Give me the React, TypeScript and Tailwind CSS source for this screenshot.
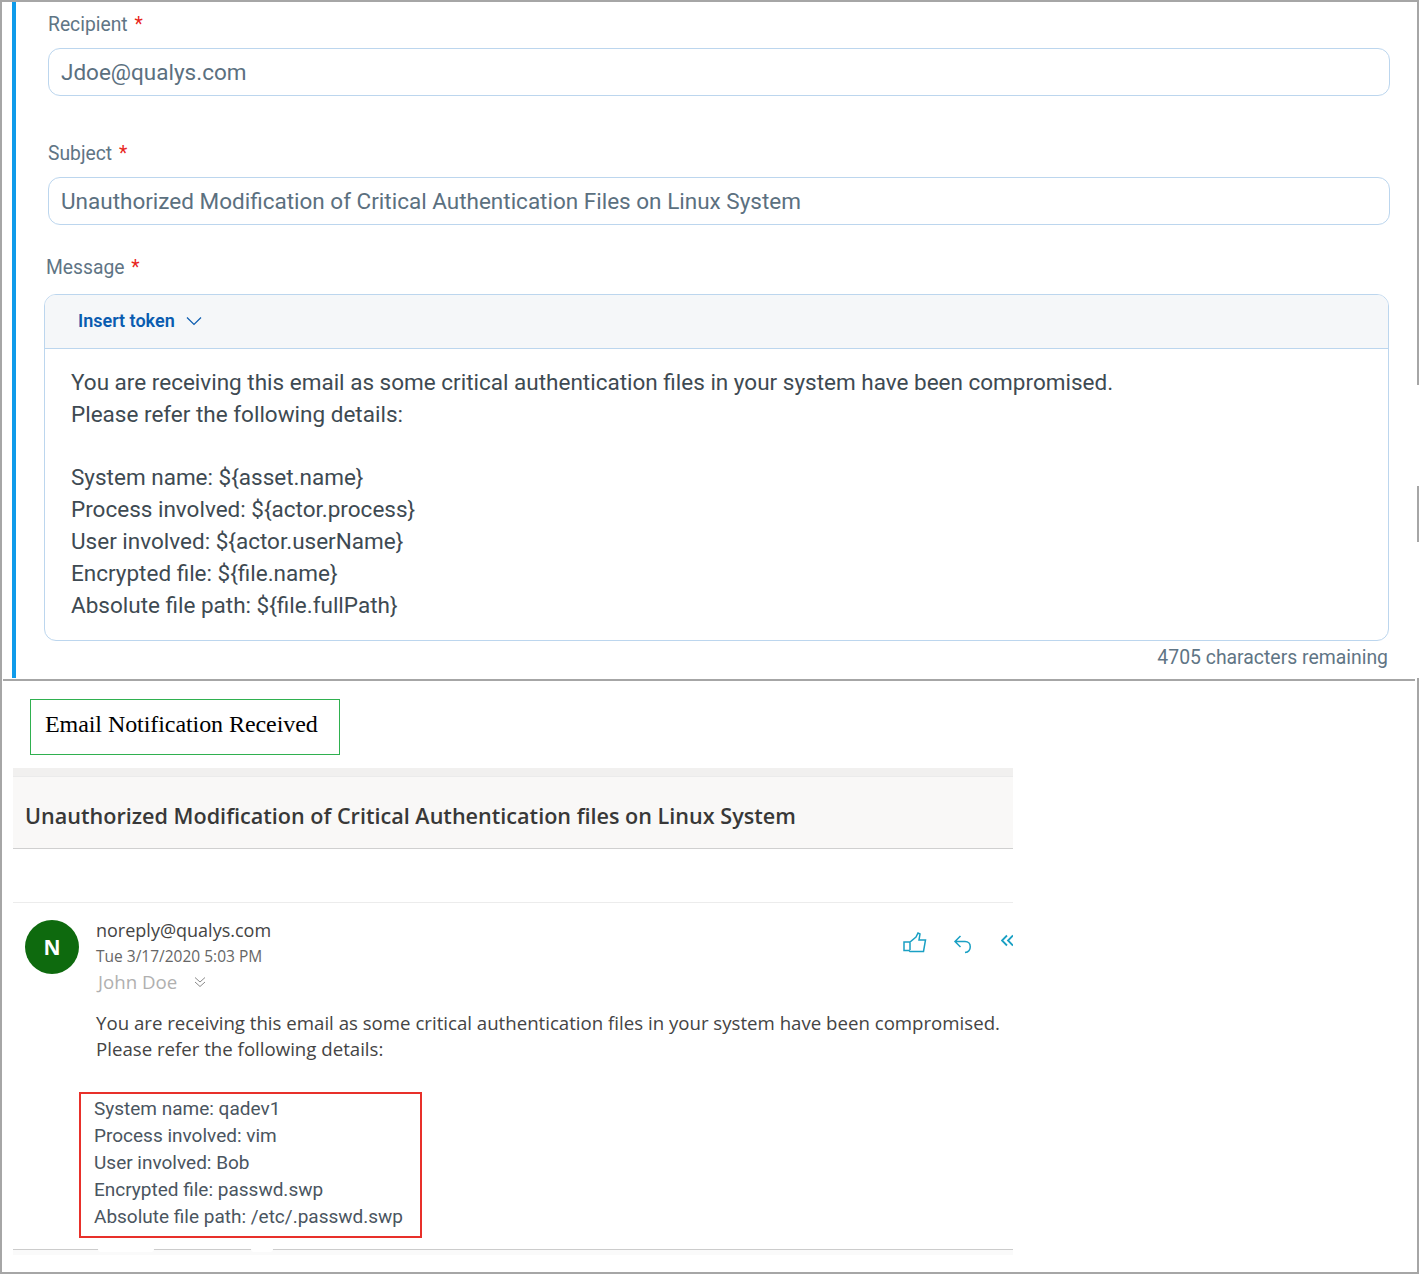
import React from 'react';

const roboto = "font-['Roboto',sans-serif]";
const openSans = "font-['Open_Sans',sans-serif]";

const messageLines = [
  'You are receiving this email as some critical authentication files in your system have been compromised.',
  'Please refer the following details:',
  '\u00a0',
  'System name: ${asset.name}',
  'Process involved: ${actor.process}',
  'User involved: ${actor.userName}',
  'Encrypted file: ${file.name}',
  'Absolute file path: ${file.fullPath}',
];

const details = [
  'System name: qadev1',
  'Process involved: vim',
  'User involved: Bob',
  'Encrypted file: passwd.swp',
  'Absolute file path: /etc/.passwd.swp',
];

function Label({ text, className }: { text: string; className: string }) {
  return (
    <div className={`text-[19.3px] leading-[24px] text-[#5f7585] ${className}`}>
      {text} <span className="ml-[2px] text-[#e8261c]">*</span>
    </div>
  );
}

function Field({ value, className }: { value: string; className: string }) {
  return (
    <div className={`flex h-[48px] items-center rounded-[12px] border border-[#bcd6ee] pl-[12px] pt-[1px] text-[22.5px] text-[#5b7080] ${className}`}>
      {value}
    </div>
  );
}

function FormPanel() {
  return (
    <section className={`ml-[10px] h-[676px] border-l-[4px] border-[#0f9bea] pt-[11px] ${roboto}`}>
      <Label text="Recipient" className="ml-[32px]" />
      <Field value="Jdoe@qualys.com" className="ml-[32px] mt-[11px] w-[1342px]" />
      <Label text="Subject" className="ml-[32px] mt-[46px]" />
      <Field value="Unauthorized Modification of Critical Authentication Files on Linux System" className="ml-[32px] mt-[11px] w-[1342px]" />
      <Label text="Message" className="ml-[30px] mt-[31px]" />
      <div className="ml-[28px] mt-[14px] h-[347px] w-[1345px] overflow-hidden rounded-[12px] border border-[#bcd6ee]">
        <div className="flex h-[54px] items-center gap-[11px] border-b border-[#bcd6ee] bg-[#f5f7f9] pb-[2px] pl-[33px] text-[18px] font-semibold text-[#0a5cb0]">
          Insert token
          <svg width="16" height="10" viewBox="0 0 16 10" fill="none" stroke="#0a5cb0" strokeWidth="1.2">
            <path d="M1 1.5 8 8.5 15 1.5" />
          </svg>
        </div>
        <div className="pl-[26px] pt-[18px] text-[22.5px] leading-[31.8px] text-[#3e4a52]">
          {messageLines.map((line, i) => (
            <div key={i}>{line}</div>
          ))}
        </div>
      </div>
      <div className="mt-[5px] w-[1372px] text-right text-[19.4px] leading-[24px] text-[#5f7585]">4705 characters remaining</div>
    </section>
  );
}

function EmailHeader() {
  return (
    <div className="flex h-[125px] border-t border-[#ececec] pl-[12px] pt-[17px]">
      <div className={`flex h-[54px] w-[54px] items-center justify-center rounded-full bg-[#0e6a0e] pt-[1px] text-[21px] font-bold text-white ${openSans}`}>N</div>
      <div className={`ml-[17px] ${openSans}`}>
        <div className="mt-[-3px] text-[18px] leading-[26px] text-[#444444]">noreply@qualys.com</div>
        <div className="text-[15.5px] leading-[26px] text-[#666666]">Tue 3/17/2020 5:03 PM</div>
        <div className="ml-[2px] flex items-center gap-[17px] text-[18.7px] leading-[26px] text-[#b0b0b0]">
          John Doe
          <svg width="12" height="12" viewBox="0 0 12 12" fill="none" stroke="#8a8a8a" strokeWidth="1">
            <path d="M1 1.5 6 6 11 1.5M1 6 6 10.5 11 6" />
          </svg>
        </div>
      </div>
      <div className="ml-auto mt-[11px] flex w-[110px] items-start overflow-hidden">
        <svg width="24" height="22" viewBox="0 0 24 22" fill="none" stroke="#1aa0c4" strokeWidth="1.5" className="mt-[1px] shrink-0">
          <path d="M1 10h6l6-5 2-4 2 1-1 6h6.500l-2 11.500H7l-1-1H1z M7 10v8" />
        </svg>
        <svg width="20" height="20" viewBox="0 0 20 20" fill="none" stroke="#1aa0c4" strokeWidth="1.5" className="ml-[26px] mt-[3px] shrink-0">
          <path d="M7.500 2 2 7.500 7.500 13M2 7.500h10c7 0 7 10 0 11" />
        </svg>
        <svg width="16" height="14" viewBox="0 0 16 14" fill="none" stroke="#1aa0c4" strokeWidth="1.800" className="ml-[28px] mt-[3px] shrink-0">
          <path d="M6 1.500 1 6.500 6 11.500M12 1.500 7 6.500 12 11.500M12 6.500h4" />
        </svg>
      </div>
    </div>
  );
}

function EmailPanel() {
  return (
    <div className="ml-[11px] mt-[13px] w-[1000px]">
      <div className="h-[9px] border-b border-[#ebebeb] bg-[#f1f0ef]" />
      <div className={`flex h-[72px] items-center border-b border-[#d0d0d0] bg-[#f9f8f7] pl-[12px] pt-[8px] text-[21.6px] font-semibold text-[#383838] ${openSans}`}>
        Unauthorized Modification of Critical Authentication files on Linux System
      </div>
      <div className="h-[53px]" />
      <EmailHeader />
      <div className={`mt-[-17px] whitespace-nowrap pl-[83px] text-[18.65px] leading-[26px] text-[#444444] ${openSans}`}>
        <div>You are receiving this email as some critical authentication files in your system have been compromised.</div>
        <div>Please refer the following details:</div>
      </div>
      <div className={`ml-[66px] mt-[30px] h-[146px] w-[343px] border-2 border-[#e8302a] pl-[13px] text-[19px] leading-[27px] text-[#4a5560] ${roboto}`}>
        <div className="pt-[1px]">
          {details.map((line) => (
            <div key={line}>{line}</div>
          ))}
        </div>
      </div>
      <div className="relative mt-[11px] h-[6px] border-t border-[#cccccc] bg-[#fafafa]">
        <div className="absolute left-[85px] top-[-1px] h-[3px] w-[56px] rounded-b-full bg-white" />
        <div className="absolute left-[238px] top-[-1px] h-[3px] w-[22px] rounded-b-full bg-white" />
      </div>
    </div>
  );
}

export default function App() {
  return (
    <main className="relative h-[1274px] w-[1419px] border-2 border-[#a6a6a6] bg-white">
      {/* gaps in the right hand frame line */}
      <div className="absolute right-[-2px] top-[383px] h-[101px] w-[2px] bg-white" />
      <div className="absolute right-[-2px] top-[540px] h-[136px] w-[2px] bg-white" />
      <FormPanel />
      <div className="ml-[1px] mr-[2px] mt-[1px] h-[2px] bg-[#a6a6a6]" />
      <div className="ml-[28px] mt-[18px] flex h-[56px] w-[310px] items-center border border-[#2fb04f] pb-[6px] pl-[14px] font-['Liberation_Serif',serif] text-[24px] tracking-[-0.07px] text-black">
        Email Notification Received
      </div>
      <EmailPanel />
    </main>
  );
}
